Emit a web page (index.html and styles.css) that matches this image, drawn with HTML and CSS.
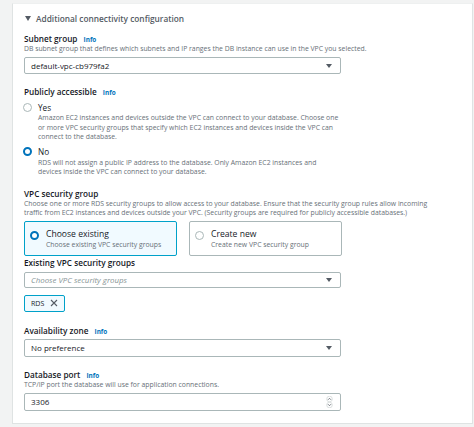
FILE: index.html
```html
<!DOCTYPE html>
<html>
<head>
<meta charset="utf-8">
<link rel="stylesheet" href="styles.css">
</head>
<body>
<div class="panel">
  <div class="header">
    <svg class="caret" width="6" height="5" viewBox="0 0 6 5"><path d="M0 0H6L3 5Z" fill="#545b64"/></svg>
    <span>Additional connectivity configuration</span>
  </div>

  <div class="label mt10">Subnet group <span class="info">Info</span></div>
  <div class="desc">DB subnet group that defines which subnets and IP ranges the DB instance can use in the VPC you selected.</div>
  <div class="select mt3 h17">
    <span>default-vpc-cb979fa2</span>
    <svg class="arrow" width="6" height="4" viewBox="0 0 6 4"><path d="M0 0H6L3 4Z" fill="#545b64"/></svg>
  </div>

  <div class="label mt13">Publicly accessible <span class="info">Info</span></div>
  <div class="radio-row mt5">
    <span class="radio"></span><span class="rlabel">Yes</span>
  </div>
  <div class="rdesc">Amazon EC2 instances and devices outside the VPC can connect to your database. Choose one<br>or more VPC security groups that specify which EC2 instances and devices inside the VPC can<br>connect to the database.</div>
  <div class="radio-row mt5">
    <span class="radio on"></span><span class="rlabel">No</span>
  </div>
  <div class="rdesc">RDS will not assign a public IP address to the database. Only Amazon EC2 instances and<br>devices inside the VPC can connect to your database.</div>

  <div class="label mt12">VPC security group</div>
  <div class="desc2">Choose one or more RDS security groups to allow access to your database. Ensure that the security group rules allow incoming<br>traffic from EC2 instances and devices outside your VPC. (Security groups are required for publicly accessible databases.)</div>
  <div class="cards">
    <div class="card sel">
      <span class="radio on"></span>
      <div>
        <div class="ctitle">Choose existing</div>
        <div class="csub">Choose existing VPC security groups</div>
      </div>
    </div>
    <div class="card">
      <span class="radio"></span>
      <div>
        <div class="ctitle">Create new</div>
        <div class="csub">Create new VPC security group</div>
      </div>
    </div>
  </div>

  <div class="label mt2">Existing VPC security groups</div>
  <div class="select mt4 h16">
    <span class="ph">Choose VPC security groups</span>
    <svg class="arrow" width="6" height="4" viewBox="0 0 6 4"><path d="M0 0H6L3 4Z" fill="#545b64"/></svg>
  </div>
  <div class="token">
    <span>RDS</span>
    <svg width="8" height="8" viewBox="0 0 8 8"><path d="M1 1L7 7M7 1L1 7" stroke="#545b64" stroke-width="1.1"/></svg>
  </div>

  <div class="label mt14">Availability zone <span class="info">Info</span></div>
  <div class="select mt3 h18">
    <span>No preference</span>
    <svg class="arrow" width="6" height="4" viewBox="0 0 6 4"><path d="M0 0H6L3 4Z" fill="#545b64"/></svg>
  </div>

  <div class="label mt13">Database port <span class="info">Info</span></div>
  <div class="desc">TCP/IP port the database will use for application connections.</div>
  <div class="select mt3 h18">
    <span>3306</span>
    <svg class="spin" width="7" height="12" viewBox="0 0 7 12">
      <circle cx="3.5" cy="3" r="2.8" fill="none" stroke="#c6cccc" stroke-width="0.6"/>
      <path d="M2 3.8L3.5 2.3L5 3.8" fill="none" stroke="#545b64" stroke-width="0.8"/>
      <circle cx="3.5" cy="9" r="2.8" fill="none" stroke="#c6cccc" stroke-width="0.6"/>
      <path d="M2 8.2L3.5 9.7L5 8.2" fill="none" stroke="#545b64" stroke-width="0.8"/>
    </svg>
  </div>
</div>
</body>
</html>
```

FILE: styles.css
```css
html, body {
  margin: 0;
  padding: 0;
}
body {
  background: #f2f3f3;
  font-family: "Open Sans", "Noto Sans", sans-serif;
  color: #16191f;
  padding-top: 3px;
  height: 424px;
}
.panel {
  margin-left: 12px;
  width: 448px;
  background: #fff;
  border: 1px solid #dfe3e3;
  border-top-color: #eef0f0;
  padding: 8px 0 12px 11px;
}
.header {
  display: flex;
  align-items: center;
  height: 12px;
  font-size: 8.3px;
  font-weight: 600;
  color: #545b64;
}
.caret {
  margin-left: 1px;
  margin-right: 5px;
}
.label {
  font-size: 8.2px;
  font-weight: 560;
  line-height: 10px;
  height: 10px;
  color: #16191f;
  white-space: nowrap;
}
.info {
  color: #0073bb;
  font-size: 6.4px;
  font-weight: 700;
  margin-left: 4px;
}
.desc {
  font-size: 6.85px;
  line-height: 10px;
  color: #687078;
  white-space: nowrap;
}
.desc2 {
  font-size: 6.85px;
  line-height: 9.5px;
  color: #687078;
  white-space: nowrap;
}
.mt2 { margin-top: 2px; }
.mt3 { margin-top: 3px; }
.mt4 { margin-top: 4px; }
.mt5 { margin-top: 5px; }
.mt10 { margin-top: 10px; }
.mt12 { margin-top: 12px; }
.mt13 { margin-top: 13px; }
.mt14 { margin-top: 14px; }
.h16 { height: 16px; }
.h17 { height: 17px; }
.h18 { height: 18px; }
.select {
  box-sizing: border-box;
  width: 317px;
  border: 1px solid #aab7b8;
  border-radius: 2px;
  display: flex;
  align-items: center;
  justify-content: space-between;
  padding: 0 8px 0 6px;
  font-size: 8px;
  color: #16191f;
}
.ph {
  font-style: italic;
  color: #879596;
  font-size: 7.9px;
}
.spin {
  margin-right: -1px;
}
.radio-row {
  display: flex;
  align-items: center;
  height: 10px;
}
.radio {
  box-sizing: border-box;
  width: 9px;
  height: 9px;
  border-radius: 50%;
  border: 1px solid #aab7b8;
  background: #fff;
  flex: none;
  margin-left: -1px;
}
.radio.on {
  border: 2.6px solid #0073bb;
}
.rlabel {
  margin-left: 6px;
  font-size: 8.2px;
  font-weight: 400;
  color: #16191f;
}
.rdesc {
  margin-top: 1px;
  margin-left: 14px;
  font-size: 6.85px;
  line-height: 9.5px;
  color: #687078;
  white-space: nowrap;
}
.cards {
  display: flex;
  gap: 12px;
  margin-top: 3px;
}
.card {
  box-sizing: border-box;
  width: 153px;
  height: 35px;
  border: 1px solid #aab7b8;
  border-radius: 2px;
  display: flex;
  align-items: flex-start;
  padding: 7px 0 0 5px;
}
.card.sel {
  background: #f1faff;
  border-color: #00a1c9;
}
.card .radio {
  margin-top: 2px;
  margin-left: 0;
}
.card > div {
  margin-left: 7px;
}
.ctitle {
  font-size: 8.6px;
  line-height: 10px;
  color: #16191f;
}
.csub {
  font-size: 6.85px;
  line-height: 11px;
  color: #687078;
  white-space: nowrap;
}
.token {
  box-sizing: border-box;
  margin-top: 7px;
  width: 41px;
  height: 17px;
  border: 1px solid #00a1c9;
  border-radius: 2px;
  background: #f1faff;
  display: flex;
  align-items: center;
  padding-left: 6px;
  gap: 6px;
  font-size: 7px;
  color: #16191f;
}
```
